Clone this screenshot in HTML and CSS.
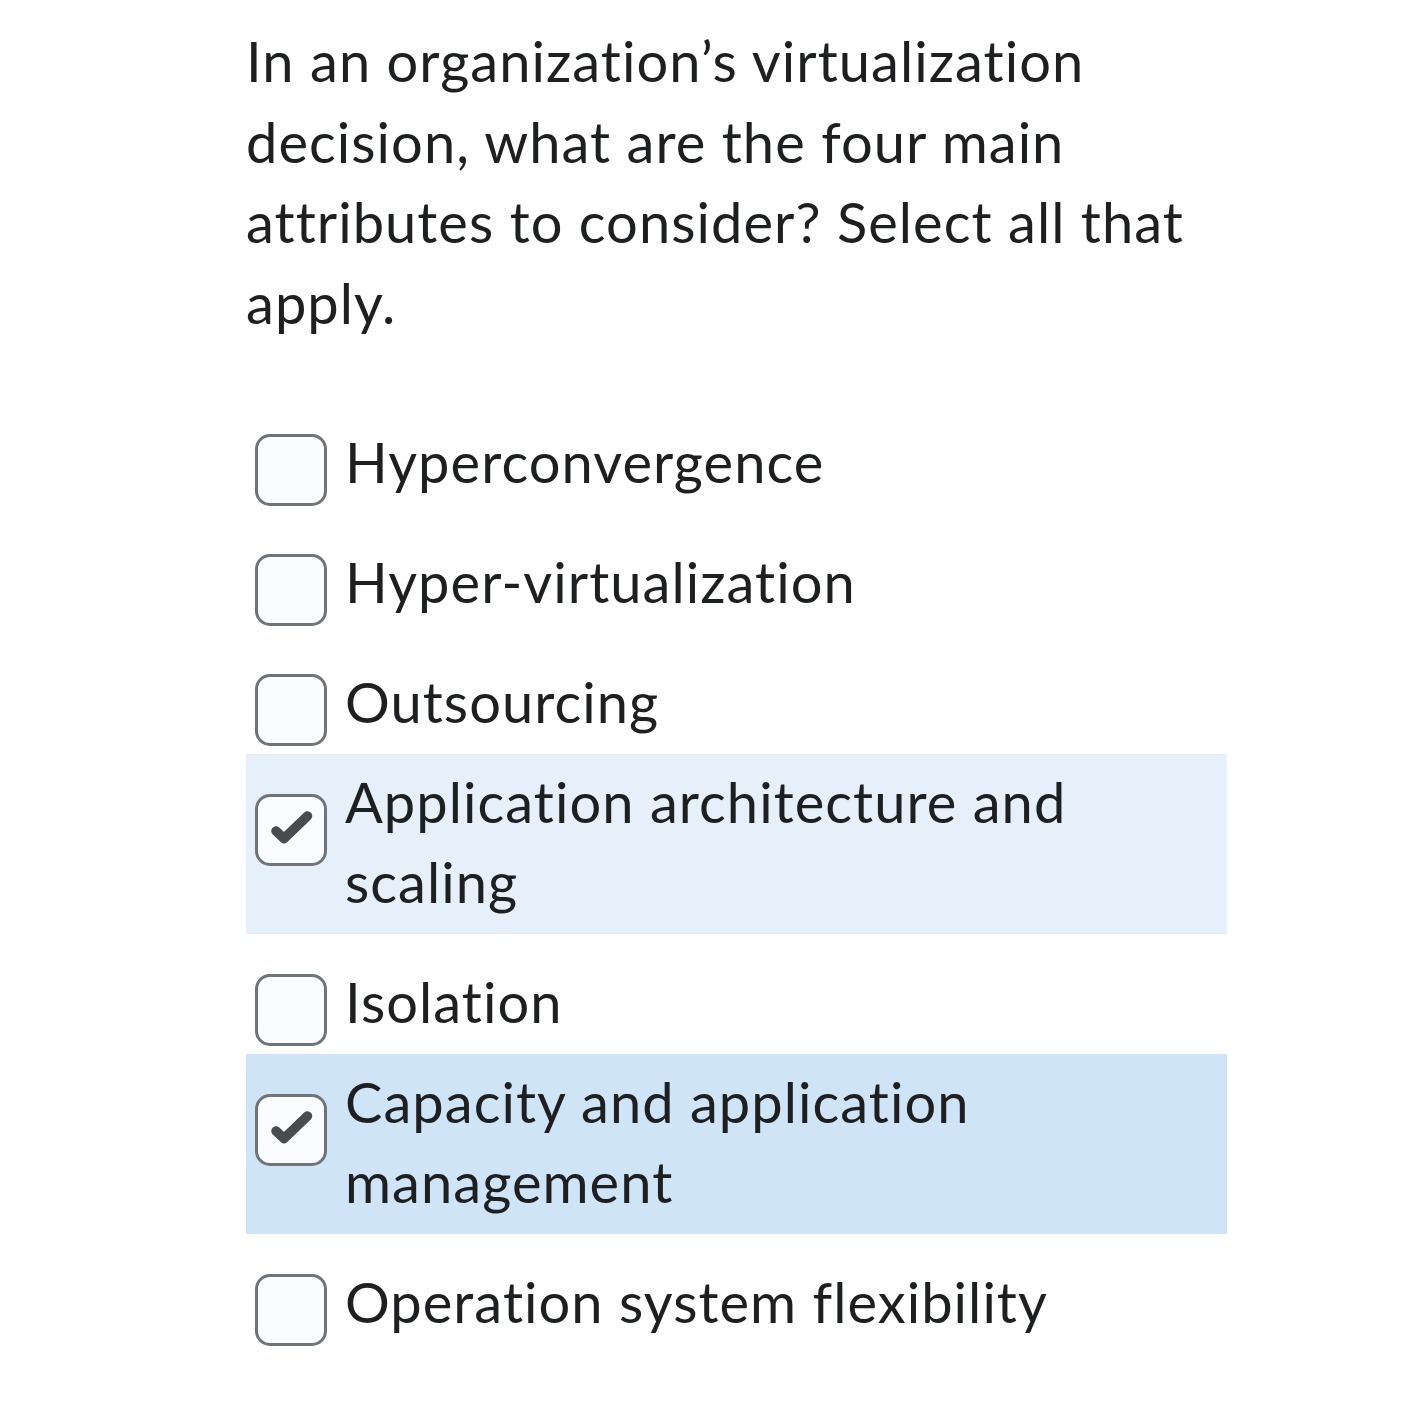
FILE: index.html
```html
<!DOCTYPE html>
<html lang="en">
<head>
<meta charset="utf-8">
<title>Question</title>
<link rel="stylesheet" href="styles.css">
</head>
<body>
<main class="quiz">
  <p class="question">In an organization’s virtualization decision, what are the four main attributes to consider? Select all that apply.</p>
  <ul class="options">
    <li class="option">
      <span class="box"></span>
      <span class="label">Hyperconvergence</span>
    </li>
    <li class="option">
      <span class="box"></span>
      <span class="label">Hyper-virtualization</span>
    </li>
    <li class="option">
      <span class="box"></span>
      <span class="label">Outsourcing</span>
    </li>
    <li class="option option-selected">
      <span class="box"><svg class="tick" viewBox="0 0 72 72"><path d="M21 37 L29 44.5 L52.5 22"/></svg></span>
      <span class="label">Application architecture and scaling</span>
    </li>
    <li class="option">
      <span class="box"></span>
      <span class="label">Isolation</span>
    </li>
    <li class="option option-selected option-hover">
      <span class="box"><svg class="tick" viewBox="0 0 72 72"><path d="M21 37 L29 44.5 L52.5 22"/></svg></span>
      <span class="label">Capacity and application management</span>
    </li>
    <li class="option">
      <span class="box"></span>
      <span class="label">Operation system flexibility</span>
    </li>
  </ul>
</main>
</body>
</html>
```
FILE: styles.css
```css
html, body {
  margin: 0;
  padding: 0;
  background: #ffffff;
}

body {
  font-family: Lato, "Noto Sans", sans-serif;
  color: #1e1f20;
  font-variant-ligatures: none;
  letter-spacing: 1.05px;
}

.quiz {
  width: 981px;
  margin-left: 246px;
  padding-top: 21px;
}

.question {
  margin: 0;
  font-size: 56px;
  line-height: 80.5px;
}

.options {
  list-style: none;
  margin: 51px 0 0;
  padding: 0;
}

.option {
  display: flex;
  box-sizing: border-box;
  min-height: 120px;
}

.option-selected {
  background: #e6f0fb;
}

.option-hover {
  background: #d0e4f8;
}

.box {
  flex: 0 0 auto;
  align-self: flex-start;
  box-sizing: border-box;
  width: 72px;
  height: 72px;
  margin: 40px 18px 0 9px;
  border: 3px solid #6f7477;
  border-radius: 15px;
  background: #f9fbff;
  position: relative;
}

.tick {
  position: absolute;
  left: -3px;
  top: -3px;
  width: 72px;
  height: 72px;
}

.tick path {
  fill: none;
  stroke: #494c4e;
  stroke-width: 9.5;
  stroke-linecap: round;
  stroke-linejoin: round;
}

.label {
  align-self: flex-end;
  font-size: 56px;
  line-height: 80px;
  padding: 8px 40px 12px 0;
}
```
